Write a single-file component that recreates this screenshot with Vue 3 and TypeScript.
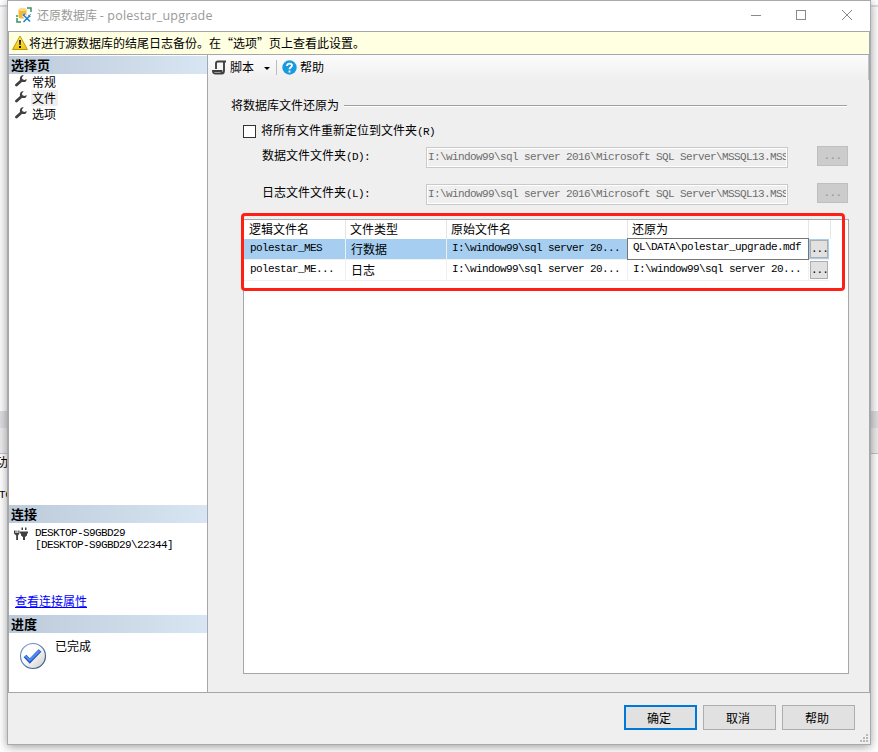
<script setup lang="ts">
interface Row {
  name: string
  type: string
  original: string
  target: string
  selected: boolean
}

const pages: { label: string; active: boolean }[] = [
  { label: '常规', active: false },
  { label: '文件', active: true },
  { label: '选项', active: false },
]

const folders: { label: string; key: string; path: string }[] = [
  { label: '数据文件文件夹', key: '(D):', path: 'I:\\window99\\sql server 2016\\Microsoft SQL Server\\MSSQL13.MSS' },
  { label: '日志文件文件夹', key: '(L):', path: 'I:\\window99\\sql server 2016\\Microsoft SQL Server\\MSSQL13.MSS' },
]

const rows: Row[] = [
  { name: 'polestar_MES', type: '行数据', original: 'I:\\window99\\sql server 20...', target: 'QL\\DATA\\polestar_upgrade.mdf', selected: true },
  { name: 'polestar_ME...', type: '日志', original: 'I:\\window99\\sql server 20...', target: 'I:\\window99\\sql server 20...', selected: false },
]
</script>

<template>
  <div class="desktop">
    <div class="behind">
      <div class="code-strip"></div>
      <div class="pane"></div>
      <div class="tabs"></div>
      <div class="results"></div>
    </div>
    <span class="frag frag-a">功</span>
    <span class="frag frag-b">TO</span>
    <div class="window">
      <header class="titlebar">
        <svg class="app-icon" width="16" height="16" viewBox="0 0 16 16">
          <path d="M11 1h4v4M1 11v4h4M1 8v2M14 7v1" fill="none" stroke="#37945a" stroke-width="1.5" />
          <path d="M2.500 2.500v7.500c0 2 8 2 8 0V2.500z" fill="#f5b834" />
          <ellipse cx="6.500" cy="2.400" rx="4" ry="1.700" fill="#ffd98a" />
          <path d="M7 7.500l7 7M14.500 8l-7 7" stroke="#fff" stroke-width="3.400" />
          <path d="M7.500 8l6.500 6.500M14 8.500L7.500 15M6.800 8.800l2-2M12.500 8l1.800 1.800" fill="none" stroke="#1c80c8" stroke-width="1.500" />
        </svg>
        <span class="title">还原数据库 <span class="latin">- polestar_upgrade</span></span>
        <svg class="controls" width="103" height="12" viewBox="0 0 103 12" fill="none" stroke="#8a8a8a" stroke-width="1">
          <path d="M0 5.500h10" />
          <rect x="45.500" y="0.500" width="9" height="9" />
          <path d="M91 0l10 10M101 0l-10 10" />
        </svg>
      </header>

      <div class="inner">
        <div class="warning">
          <svg width="16" height="16" viewBox="0 0 16 16">
            <defs>
              <linearGradient id="warn" x1="0" y1="0" x2="0" y2="1">
                <stop offset="0" stop-color="#fff06a" />
                <stop offset="1" stop-color="#f2c500" />
              </linearGradient>
            </defs>
            <path d="M8 1L15.400 14.500H.6z" fill="url(#warn)" stroke="#c09410" stroke-linejoin="round" />
            <path d="M7 5h2l-.4 5H7.400zM7 11h2v2H7z" fill="#111" />
          </svg>
          <span>将进行源数据库的结尾日志备份。在“选项”页上查看此设置。</span>
        </div>

        <div class="body">
          <aside class="sidebar">
            <h2>选择页</h2>
            <ul class="pages">
              <li v-for="p in pages" :key="p.label">
                <svg width="12" height="12" viewBox="0 0 12 12">
                  <path d="M1.500 10L6.500 5.500" stroke="#404040" stroke-width="2.800" stroke-linecap="round" />
                  <path d="M8.800.3a3.400 3.400 0 1 0 2.900 3.600L9.500 5 7.300 4.300 7 2.300z" fill="#404040" />
                </svg>
                <span :class="{ active: p.active }">{{ p.label }}</span>
              </li>
            </ul>
            <h2>连接</h2>
            <div class="connection">
              <div class="server">
                <svg width="14" height="14" viewBox="0 0 14 14">
                  <path d="M0 3.500h1.500v2.500h1V3.500h.8V6h1V3.500H5.500v3L4 8.500V13H2.200V8.500L0 6.500zM6 4.500h8v2h-1v2l-2 1.500v3H9v-3L7 8.500v-2H6zM7.500.5H9V3H7.500zM11 .5h1.500V3H11z" fill="#404040" />
                </svg>
                <div class="mono host">DESKTOP-S9GBD29<br />[DESKTOP-S9GBD29\22344]</div>
              </div>
              <a class="link">查看连接属性</a>
            </div>
            <h2>进度</h2>
            <div class="progress">
              <svg width="28" height="28" viewBox="0 0 28 28">
                <defs>
                  <linearGradient id="disc" x1="0" y1="0" x2="1" y2="1">
                    <stop offset="0.4" stop-color="#fff" />
                    <stop offset="1" stop-color="#c9c9c9" />
                  </linearGradient>
                  <linearGradient id="ring" x1="0" y1="0" x2="1" y2="1">
                    <stop offset="0" stop-color="#7ba0d4" />
                    <stop offset="1" stop-color="#34507c" />
                  </linearGradient>
                </defs>
                <circle cx="14" cy="14" r="12.500" fill="url(#disc)" stroke="url(#ring)" stroke-width="1.200" />
                <path d="M6 14l4.800 5L21 8.500" fill="none" stroke="#2457b8" stroke-width="3.800" />
                <path d="M6.500 14l4.300 4.300L20.500 8.700" fill="none" stroke="#4f8cf5" stroke-width="2" />
              </svg>
              <span>已完成</span>
            </div>
          </aside>

          <main class="main">
            <div class="toolbar">
              <svg width="15" height="15" viewBox="0 0 15 15">
                <path d="M4 9V3.500C4 2 4.500 1.500 6 1.500h8M12 2v8.500c0 2-.5 3-2 3H3c-1.500 0-2-1-2-2.500h8.500c0 1.500 0 2.500 1 2.500" fill="none" stroke="#404040" stroke-width="1.900" />
              </svg>
              <span class="script">脚本</span>
              <i class="caret"></i>
              <i class="divider"></i>
              <svg width="15" height="15" viewBox="0 0 15 15">
                <circle cx="7.500" cy="7.500" r="7.200" fill="#1a9be0" />
                <path d="M5 6c0-3.200 5-3.200 5-.4C10 7.300 7.500 7.300 7.500 9.200M7.500 10.500v2" fill="none" stroke="#fff" stroke-width="1.800" />
              </svg>
              <span class="help">帮助</span>
            </div>

            <section class="content">
              <div class="group"><span>将数据库文件还原为</span><i></i></div>
              <label class="relocate"><i></i><span>将所有文件重新定位到文件夹<span class="mono">(R)</span></span></label>
              <div v-for="f in folders" :key="f.key" class="folder">
                <span class="folder-label">{{ f.label }}<span class="mono">{{ f.key }}</span></span>
                <div class="path mono"><span>{{ f.path }}</span></div>
                <button class="browse mono" disabled>...</button>
              </div>

              <div class="files">
                <div class="grid head">
                  <span>逻辑文件名</span><span>文件类型</span><span>原始文件名</span><span>还原为</span><span></span>
                </div>
                <div v-for="r in rows" :key="r.name" class="grid row" :class="{ selected: r.selected }">
                  <span class="mono">{{ r.name }}</span>
                  <span>{{ r.type }}</span>
                  <span class="mono">{{ r.original }}</span>
                  <span class="mono" :class="{ editing: r.selected }">{{ r.target }}</span>
                  <span class="pick"><button class="mono">...</button></span>
                </div>
                <div class="highlight"></div>
              </div>
            </section>
          </main>
        </div>
      </div>

      <footer class="footer">
        <button class="primary">确定</button>
        <button>取消</button>
        <button>帮助</button>
        <svg class="grip" width="9" height="9" viewBox="0 0 9 9" fill="#b8b8b8">
          <path d="M6 0h2v2H6zM3 3h2v2H3zM6 3h2v2H6zM0 6h2v2H0zM3 6h2v2H3zM6 6h2v2H6z" />
        </svg>
      </footer>
    </div>
  </div>
</template>

<style>
body {
  margin: 0;
  overflow: hidden;
}
</style>

<style scoped>
* {
  box-sizing: border-box;
}
.desktop {
  position: relative;
  width: 878px;
  height: 752px;
  padding-left: 7px;
  overflow: hidden;
  background: #fff;
  color: #000;
  font: 12px/16px "Noto Sans CJK SC", sans-serif;
}
.behind {
  position: absolute;
  inset: 0;
  display: flex;
  flex-direction: column;
}
.code-strip { height: 7px; border-bottom: 2px solid #dcdce8; }
.pane { height: 404px; background: #fbfbfb; }
.tabs { height: 43px; background: linear-gradient(#dcdce1 17px, #ebebeb 17px); border-bottom: 1px solid #c4c4c8; }
.results { flex: 1; background: #fff; }
.frag { position: absolute; left: -4px; top: 454px; }
.frag-b { left: -1px; top: 487px; font: 11px/16px "Liberation Mono", monospace; }
.mono {
  font-family: "Liberation Mono", monospace;
  font-size: 11px;
  letter-spacing: -0.6px;
  white-space: pre;
}
.window {
  position: relative;
  width: 864px;
  height: 745px;
  display: flex;
  flex-direction: column;
  border: 1px solid #a9a9ac;
  background: #efefef;
  box-shadow: 0 2px 9px rgba(0, 0, 0, 0.38);
}
.titlebar {
  height: 30px;
  flex: none;
  display: flex;
  align-items: center;
  padding: 0 16px 0 8px;
  background: #fff;
  color: #999;
}
.app-icon { margin-top: -2px; }
.title { margin: -1px 0 0 5px; }
.latin { font: 12.5px "Open Sans", sans-serif; letter-spacing: 0.2px; }
.controls { margin-left: auto; }
.inner {
  height: 662px;
  flex: none;
  display: flex;
  flex-direction: column;
  border: 1px solid #a5a7ab;
}
.warning {
  height: 23px;
  flex: none;
  display: flex;
  align-items: center;
  gap: 1px;
  padding-left: 3px;
  background: #ffffe1;
  border-bottom: 1px solid #a5a7ab;
}
.body { flex: 1; display: flex; min-height: 0; }
.sidebar {
  width: 199px;
  flex: none;
  display: flex;
  flex-direction: column;
  padding-top: 1px;
  background: #fff;
  border-right: 1px solid #a5a7ab;
}
h2 {
  flex: none;
  height: 18px;
  margin: 0;
  padding-left: 2px;
  background: linear-gradient(90deg, #bccada, #d8e6f3);
  font-size: 13px;
  line-height: 17px;
  font-weight: 700;
}
.pages {
  height: 431px;
  margin: 0;
  padding: 0 0 0 6px;
  list-style: none;
}
.pages li { height: 16px; display: flex; align-items: center; gap: 4px; }
.pages svg { margin-top: -2px; }
.pages span { padding: 0 2px 0 1px; }
.active { background: #efefef; }
.connection { height: 92px; display: flex; flex-direction: column; justify-content: space-between; padding: 4px 5px 6px; }
.server { display: flex; gap: 7px; }
.host { line-height: 12px; }
.link { padding-left: 1px; color: #00f; text-decoration: underline; }
.progress { display: flex; padding: 9px 10px; gap: 8px; }
.progress span { margin-top: -4px; }
.main { flex: 1; min-width: 0; display: flex; flex-direction: column; }
.toolbar {
  height: 25px;
  display: flex;
  align-items: center;
  padding-left: 4px;
  background: linear-gradient(#fcfcfc, #efefef);
  border-right: 1px solid #c4c4c6;
}
.script { margin: -1px 0 0 3px; }
.caret { margin: 2px 0 0 10px; border: 3px solid transparent; border-top-color: #000; border-bottom: 0; }
.divider { width: 1px; height: 15px; margin: 0 5px 0 6px; background: #bdbdbd; }
.help { margin: -1px 0 0 3px; }
.content { width: 639px; padding: 17px 0 0 23px; display: flex; flex-direction: column; }
.group { height: 16px; display: flex; align-items: center; gap: 5px; }
.group i { flex: 1; height: 2px; margin-top: 2px; background: linear-gradient(#a0a0a0 50%, #fff 50%); }
.relocate { display: flex; align-items: center; gap: 5px; height: 16px; margin: 10px 0 8px 12px; }
.relocate i { width: 13px; height: 13px; border: 1px solid #333; background: #fff; }
.folder { height: 21px; display: flex; margin-bottom: 16px; }
.folder-label { width: 195px; flex: none; padding-left: 31px; line-height: 16px; white-space: nowrap; }
.path {
  width: 362px;
  flex: none;
  height: 21px;
  padding: 1px;
  border: 1px solid #c9c9c9;
  background: #efefef;
  box-shadow: inset 0 0 0 1px #fff;
  color: #6d6d6d;
  line-height: 17px;
}
.path span { display: block; width: 358px; overflow: hidden; }
button { padding: 0; border: 1px solid #adadad; background: #e1e1e1; color: #000; font: inherit; }
.browse {
  width: 31px;
  flex: none;
  height: 20px;
  margin: -1px 0 0 29px;
  border-color: #bfbfbf;
  background: #ccc;
  color: #929292;
  font: 11px/18px "Liberation Mono", monospace;
  letter-spacing: -0.6px;
}
.files {
  position: relative;
  width: 606px;
  height: 455px;
  margin: -2px 0 0 12px;
  border: 1px solid #a5a7ab;
  background: #fff;
}
.grid { display: grid; grid-template-columns: 102px 101px 181px 181px 22px; width: 587px; }
.head { height: 19px; line-height: 18px; }
.head span { padding-left: 5px; border-right: 1px solid #e5e5e5; }
.head span + span { padding-left: 4px; }
.row { height: 21px; width: 585px; line-height: 19px; border-bottom: 1px solid #f0f0f0; }
.row > span { padding-left: 6px; border-right: 1px solid #f0f0f0; white-space: pre; overflow: hidden; }
.row > span + span { padding-left: 5px; }
.row > .pick, .row > span + .pick { padding: 1px 0 0 1px; border: 0; }
.selected { background: #a5cef0; }
.row > .editing { margin: -1px 0 -1px -1px; border: 1px solid #777; background: #fff; line-height: 17px; }
.pick button { display: block; width: 18px; height: 18px; font-size: 11px; line-height: 16px; letter-spacing: -1px; }
.highlight {
  position: absolute;
  left: -3px;
  top: -7px;
  width: 604px;
  height: 78px;
  border: 3px solid #ff2015;
  border-radius: 4px;
}
.footer {
  position: relative;
  flex: 1;
  display: flex;
  justify-content: flex-end;
  gap: 6px;
  padding: 12px 15px 0 0;
}
.footer button { width: 73px; height: 25px; padding-right: 3px; line-height: 22px; }
.footer .primary { border: 2px solid #0078d7; line-height: 20px; }
.grip { position: absolute; right: 1px; bottom: 1px; }
</style>
